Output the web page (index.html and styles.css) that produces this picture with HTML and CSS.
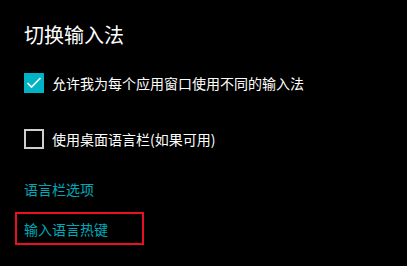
FILE: index.html
```html
<!DOCTYPE html>
<html lang="zh-CN">
<head>
<meta charset="utf-8">
<link rel="stylesheet" href="styles.css">
</head>
<body>
<div class="panel">
  <h1 class="title">切换输入法</h1>
  <div class="row row-first">
    <span class="box box-checked">
      <svg width="20" height="20" viewBox="0 0 20 20"><polyline points="3.5,10 7.5,14 16.5,5" fill="none" stroke="#fff" stroke-width="1.6"/></svg>
    </span>
    <span class="label">允许我为每个应用窗口使用不同的输入法</span>
  </div>
  <div class="row row-second">
    <span class="box box-empty"></span>
    <span class="label">使用桌面语言栏(如果可用)</span>
  </div>
  <a class="link link-first">语言栏选项</a>
  <div class="focus">
    <a class="link">输入语言热键</a>
  </div>
</div>
</body>
</html>
```
FILE: styles.css
```css
html, body {
  margin: 0;
  padding: 0;
  background: #000;
}
body {
  width: 407px;
  height: 266px;
  overflow: hidden;
  font-family: "Noto Sans CJK SC", "Noto Sans", sans-serif;
  color: #fff;
}
.panel {
  padding-left: 24px;
  display: flex;
  flex-direction: column;
  align-items: flex-start;
}
.title {
  margin: 22px 0 0;
  font-size: 20px;
  font-weight: normal;
  line-height: 26px;
  height: 26px;
}
.row {
  display: flex;
  align-items: center;
  height: 20px;
}
.row-first { margin-top: 25px; }
.row-second { margin-top: 36px; }
.box {
  width: 20px;
  height: 20px;
  box-sizing: border-box;
  flex: none;
}
.box svg { display: block; }
.box-checked { background: #00b4c6; }
.box-empty { border: 2px solid #cfcfcf; }
.label {
  margin-left: 8px;
  font-size: 14px;
  line-height: 20px;
}
.link {
  display: block;
  color: #00a9b9;
  font-size: 14px;
  line-height: 20px;
}
.link-first { margin-top: 30px; }
.focus {
  margin-top: 13px;
  margin-left: -9px;
  width: 129px;
  height: 33px;
  box-sizing: border-box;
  border: 2px solid #e81123;
  padding: 0 0 0 7px;
  display: flex;
  align-items: center;
}
```
